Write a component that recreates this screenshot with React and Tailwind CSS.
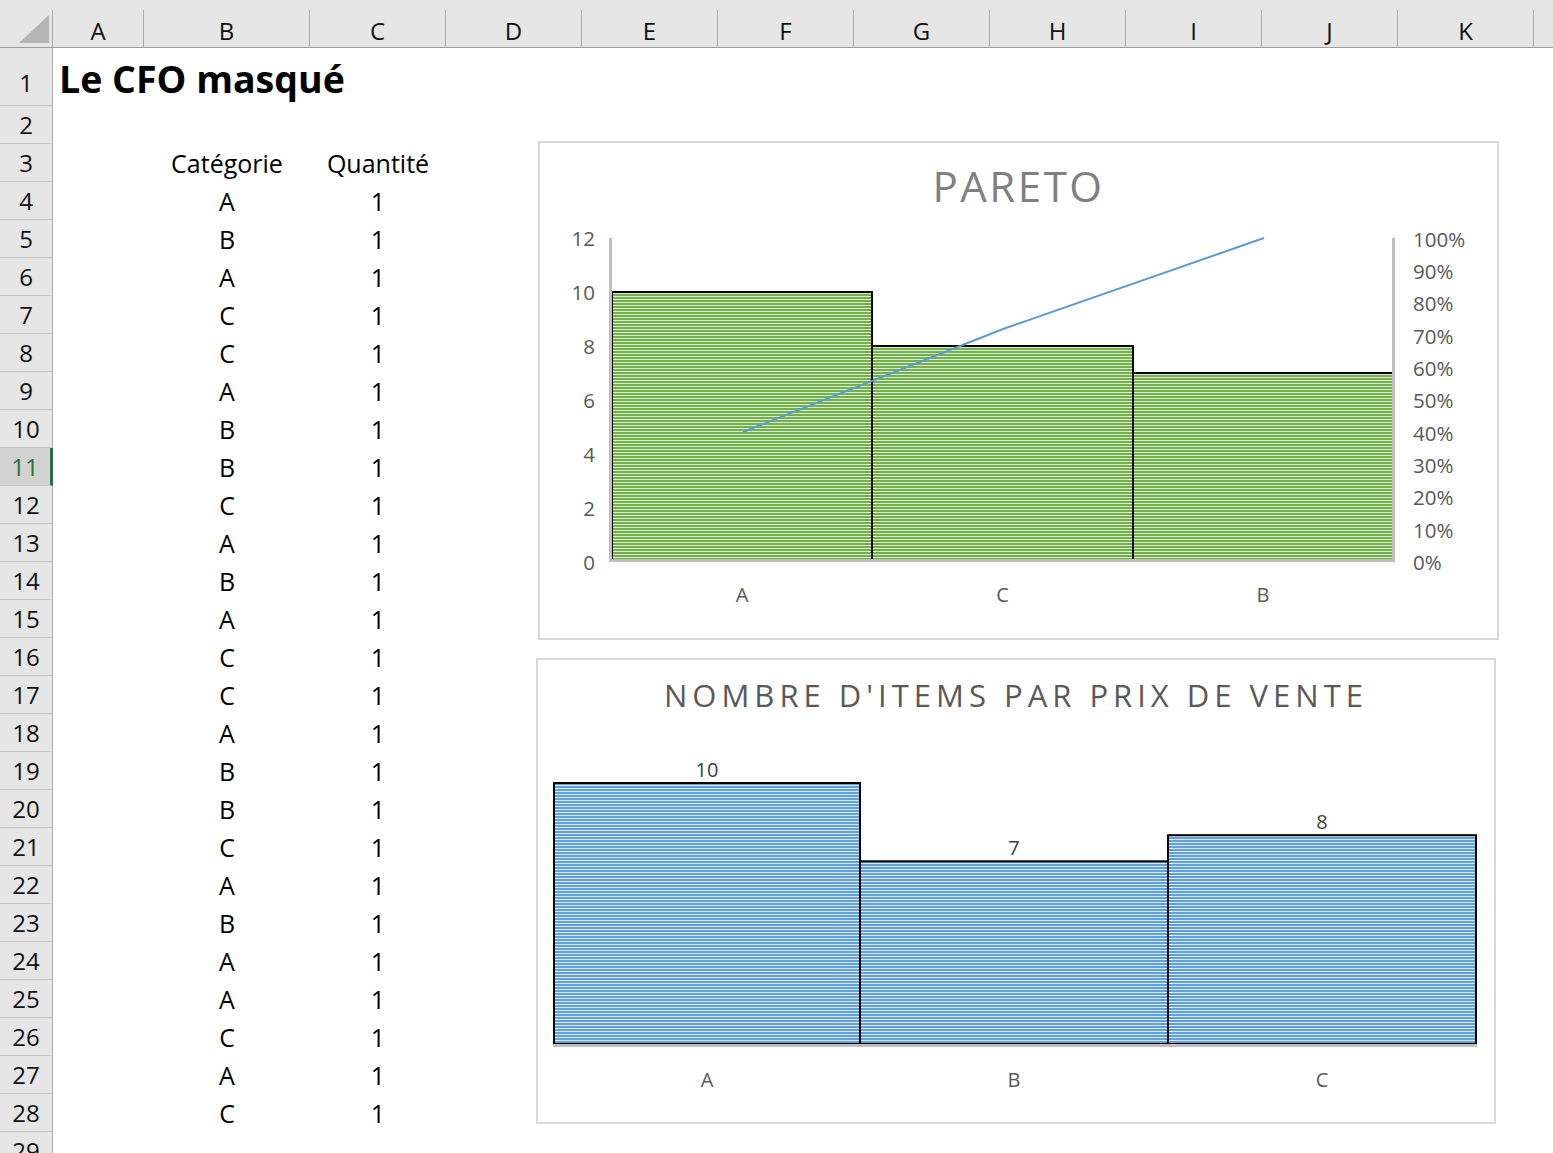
import React from 'react';

const COLS = [
  ['A', 91], ['B', 166], ['C', 136], ['D', 136], ['E', 136], ['F', 136],
  ['G', 136], ['H', 136], ['I', 136], ['J', 136], ['K', 136],
];

const DATA = 'ABACCABBCABACCABBCABAACAC'.split('');

const FONT = "font-['Open_Sans','Noto_Sans',sans-serif]";

function HeaderRow() {
  return (
    <div className="flex h-[48px] border-b border-[#9e9e9e] bg-[#e6e6e6]">
      <div className="h-full w-[53px] shrink-0 pt-[10px]">
        <div className="relative h-full border-r border-[#ababab]">
          <svg width="52" height="37" viewBox="0 10 52 37" className="block">
            <polygon points="19,43 49,43 49,15" fill="#b4b4b4" />
          </svg>
        </div>
      </div>
      {COLS.map(([name, w]) => (
        <div key={name} className="h-full shrink-0 pt-[10px]" style={{ width: w }}>
          <div className="flex h-full items-end justify-center border-r border-[#ababab] text-[24px] leading-[normal] text-[#111]">
            {name}
          </div>
        </div>
      ))}
      <div className="flex-1" />
    </div>
  );
}

function Row({ n, a, b, c, selected }) {
  const tall = n === 1;
  return (
    <div className={`flex shrink-0 ${tall ? 'h-[58px]' : 'h-[38px]'}`}>
      <div
        className={`flex w-[53px] shrink-0 items-end justify-center border-b border-b-[#c6c6c6] text-[24px] leading-[normal] ${
          selected
            ? 'border-r-[3px] border-r-[#217346] bg-[#d2d2d2] text-[#217346]'
            : 'border-r border-r-[#ababab] bg-[#e6e6e6] text-[#111]'
        } ${tall ? 'pb-[6px]' : 'pb-[2px]'}`}
      >
        {n}
      </div>
      <div className="flex w-[91px] shrink-0 items-end overflow-visible whitespace-nowrap pb-[2px] pl-[6px] text-[37.5px] font-bold leading-[normal] text-black">
        {a}
      </div>
      <div className="flex w-[166px] shrink-0 items-end justify-center pb-[2px] text-[25px] leading-[normal] text-black">
        {b}
      </div>
      <div className="flex w-[136px] shrink-0 items-end justify-center pb-[2px] text-[25px] leading-[normal] text-black">
        {c}
      </div>
      <div className="flex-1" />
    </div>
  );
}

function Stripes({ id, base, light }) {
  return (
    <pattern id={id} width="8" height="3" patternUnits="userSpaceOnUse">
      <rect width="8" height="3" fill={base} />
      <rect y="2" width="8" height="1" fill={light} />
    </pattern>
  );
}

function ParetoChart() {
  const left = [12, 10, 8, 6, 4, 2, 0];
  const right = [100, 90, 80, 70, 60, 50, 40, 30, 20, 10, 0];
  const bars = [
    { x: 612, w: 260, top: 292, label: 'A' },
    { x: 872, w: 261, top: 346, label: 'C' },
    { x: 1133, w: 260, top: 373, label: 'B' },
  ];
  return (
    <div className="absolute left-[538px] top-[141px] flex h-[499px] w-[961px] flex-col border-2 border-[#d9d9d9] bg-white">
      <div className="h-[71px] pt-[14px] text-center text-[42px] leading-[normal] tracking-[2.5px] text-[#808080]">
        PARETO
      </div>
      <svg width="957" height="424" viewBox="540 214 957 424" className="block">
        <defs>
          <Stripes id="green" base="#74b04c" light="#d9ebce" />
        </defs>
        {bars.map((b) => (
          <g key={b.label}>
            <rect x={b.x} y={b.top} width={b.w} height={560 - b.top} fill="url(#green)" />
            <rect x={b.x} y={b.top} width={b.w} height={560 - b.top} fill="none" stroke="#000" strokeWidth="2" />
            <text x={b.x + b.w / 2} y={594} textAnchor="middle" dominantBaseline="central" fontSize="20" fill="#595959">
              {b.label}
            </text>
          </g>
        ))}
        <rect x="609" y="238" width="3" height="324" fill="#bfbfbf" />
        <rect x="1392" y="238" width="3" height="324" fill="#bfbfbf" />
        <rect x="609" y="559" width="786" height="3" fill="#bfbfbf" />
        <polyline points="743,432 1003,329 1264,238" fill="none" stroke="#5b9bd5" strokeWidth="2" />
        {left.map((v) => (
          <text key={v} x="595" y={562 - v * 27} textAnchor="end" dominantBaseline="central" fontSize="20.5" fill="#595959">
            {v}
          </text>
        ))}
        {right.map((p) => (
          <text key={p} x="1413" y={562 - p * 3.235} dominantBaseline="central" fontSize="20.5" fill="#595959">
            {p}%
          </text>
        ))}
      </svg>
    </div>
  );
}

function ItemsChart() {
  const bars = [
    { x: 554, w: 306, v: 10, label: 'A' },
    { x: 860, w: 308, v: 7, label: 'B' },
    { x: 1168, w: 308, v: 8, label: 'C' },
  ];
  return (
    <div className="absolute left-[536px] top-[658px] flex h-[466px] w-[960px] flex-col border-2 border-[#d9d9d9] bg-white">
      <div className="h-[80px] pt-[14px] text-center text-[31px] leading-[normal] tracking-[5px] text-[#595959]">
        NOMBRE D'ITEMS PAR PRIX DE VENTE
      </div>
      <svg width="956" height="382" viewBox="538 740 956 382" className="block">
        <defs>
          <Stripes id="blue" base="#62a1d9" light="#d6e7f6" />
        </defs>
        {bars.map((b) => {
          const top = 1044 - b.v * 26.1;
          return (
            <g key={b.label}>
              <rect x={b.x} y={top} width={b.w} height={1044 - top} fill="url(#blue)" />
              <rect x={b.x} y={top} width={b.w} height={1044 - top} fill="none" stroke="#000" strokeWidth="2" />
              <text x={b.x + b.w / 2} y={top - 14} textAnchor="middle" dominantBaseline="central" fontSize="20" fill="#404040">
                {b.v}
              </text>
              <text x={b.x + b.w / 2} y={1079} textAnchor="middle" dominantBaseline="central" fontSize="20" fill="#595959">
                {b.label}
              </text>
            </g>
          );
        })}
        <rect x="553" y="1044" width="924" height="3" fill="#bfbfbf" />
      </svg>
    </div>
  );
}

export default function App() {
  return (
    <div className={`relative h-[1153px] w-[1553px] overflow-hidden bg-white ${FONT}`}>
      <HeaderRow />
      <div className="flex flex-col">
        <Row n={1} a="Le CFO masqué" />
        <Row n={2} />
        <Row n={3} b="Catégorie" c="Quantité" />
        {DATA.map((cat, i) => (
          <Row key={i} n={i + 4} b={cat} c="1" selected={i + 4 === 11} />
        ))}
        <Row n={29} />
      </div>
      <ParetoChart />
      <ItemsChart />
    </div>
  );
}
